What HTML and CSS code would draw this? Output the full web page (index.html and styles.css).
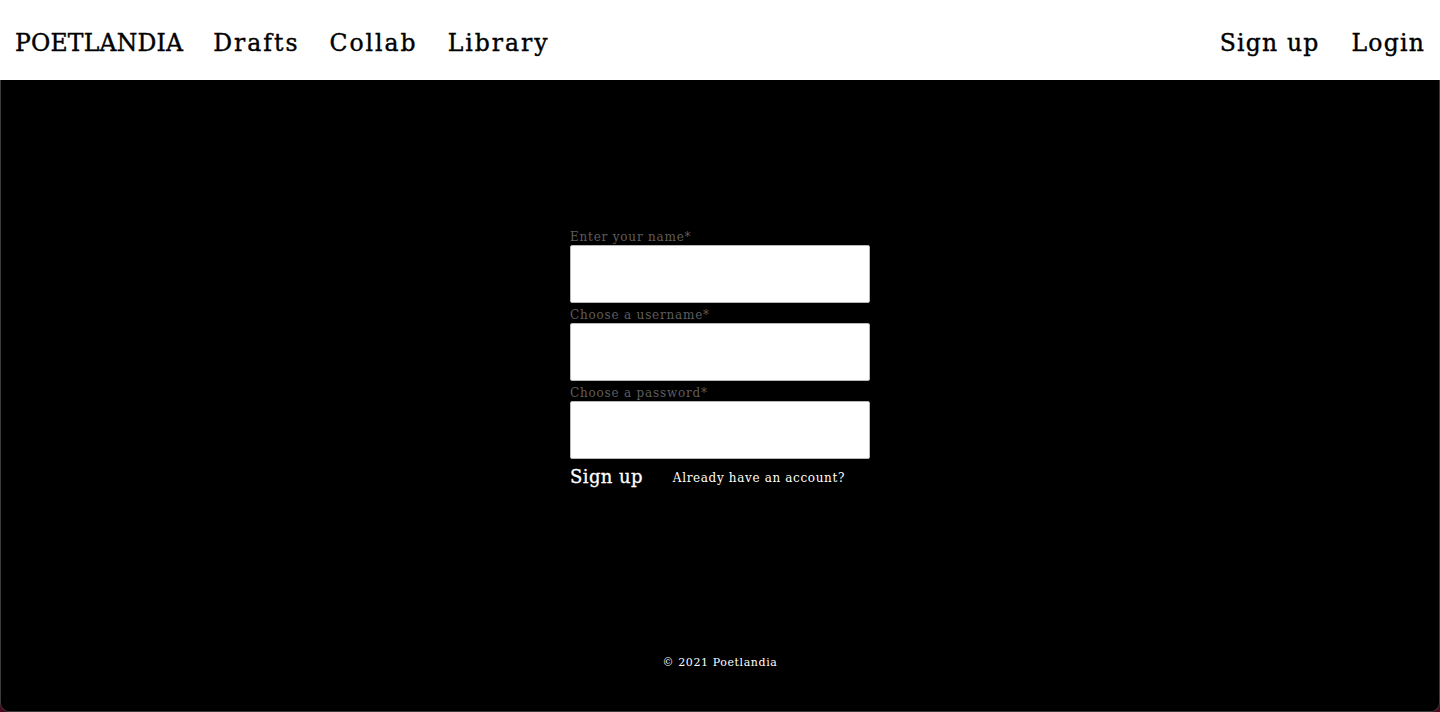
FILE: index.html
```html
<!DOCTYPE html>
<html lang="en">
<head>
<meta charset="utf-8">
<title>Poetlandia — Sign up</title>
<link rel="stylesheet" href="styles.css">
</head>
<body>
<header class="topbar">
  <nav class="nav-left">
    <a class="nav-link brand" href="#">POETLANDIA</a>
    <a class="nav-link" href="#">Drafts</a>
    <a class="nav-link" href="#">Collab</a>
    <a class="nav-link" href="#">Library</a>
  </nav>
  <nav class="nav-right">
    <a class="nav-link" href="#">Sign up</a>
    <a class="nav-link" href="#">Login</a>
  </nav>
</header>
<main class="panel">
  <form class="signup">
    <label class="field-label" for="name">Enter your name*</label>
    <input class="field" id="name" type="text">
    <label class="field-label" for="username">Choose a username*</label>
    <input class="field" id="username" type="text">
    <label class="field-label" for="password">Choose a password*</label>
    <input class="field" id="password" type="password">
    <div class="actions">
      <button class="submit" type="button">Sign up</button>
      <a class="switch" href="#">Already have an account?</a>
    </div>
  </form>
  <footer class="footer">© 2021 Poetlandia</footer>
</main>
</body>
</html>
```
FILE: styles.css
```css
html, body {
  margin: 0;
  padding: 0;
  height: 100%;
}
body {
  background: #4a0a1c;
  font-family: "DejaVu Serif", serif;
  display: flex;
  flex-direction: column;
}
.topbar {
  height: 80px;
  background: #ffffff;
  display: flex;
  align-items: center;
  justify-content: space-between;
  padding: 0 15px;
  flex: none;
}
.nav-left, .nav-right {
  display: flex;
  align-items: center;
  gap: 30px;
  padding-top: 6px;
}
.nav-right {
  gap: 32px;
}
.nav-link {
  color: #000;
  text-decoration: none;
  font-size: 23.5px;
  letter-spacing: 2px;
  -webkit-text-stroke: 0.4px #000;
}
.nav-right .nav-link {
  letter-spacing: 1.2px;
}
.nav-link.brand {
  letter-spacing: 0.2px;
}
.panel {
  flex: 1;
  background: #000;
  border: 1px solid #3a3a3a;
  border-top: none;
  border-radius: 0 0 9px 9px;
  display: flex;
  flex-direction: column;
  align-items: center;
}
.signup {
  margin-top: 150px;
  width: 300px;
  display: flex;
  flex-direction: column;
}
.field-label {
  color: #5e5e5e;
  font-size: 12px;
  letter-spacing: 0.8px;
  line-height: 15px;
  height: 15px;
  margin-top: 5px;
}
.signup .field-label:first-child {
  margin-top: 0;
}
.field {
  height: 58px;
  box-sizing: border-box;
  border: 1px solid #b8b8b8;
  border-radius: 2px;
  background: #fff;
  margin: 0;
  padding: 0 8px;
}
.actions {
  display: flex;
  align-items: center;
  gap: 30px;
  margin-top: 7px;
}
.submit {
  background: none;
  border: none;
  padding: 0;
  color: #fff;
  font-family: inherit;
  font-size: 18px;
  letter-spacing: 0.4px;
  -webkit-text-stroke: 0.3px #fff;
  cursor: pointer;
}
.switch {
  color: #fff;
  text-decoration: none;
  font-size: 12px;
  letter-spacing: 0.65px;
  padding-top: 2px;
}
.footer {
  margin-top: auto;
  padding-bottom: 42px;
  color: #fff;
  font-size: 11px;
  letter-spacing: 0.6px;
}
```
